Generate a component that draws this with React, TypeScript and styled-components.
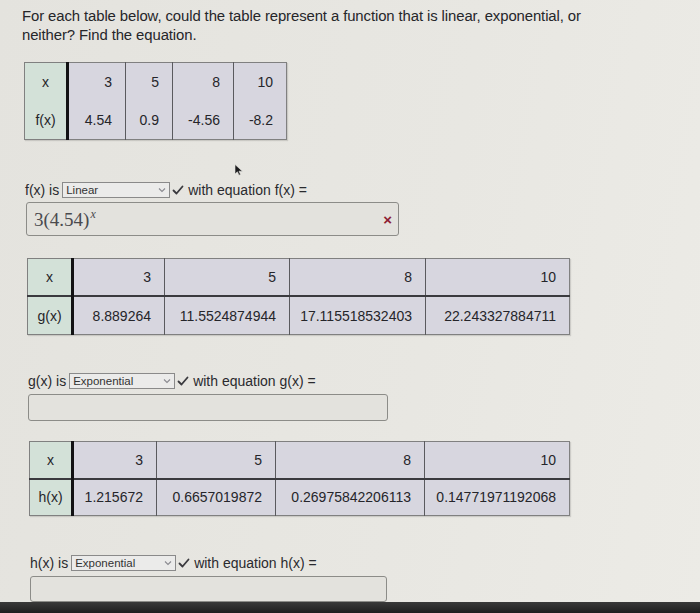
import React from "react";
import styled, { createGlobalStyle } from "styled-components";

const Global = createGlobalStyle`
  html, body { margin: 0; padding: 0; background: #e6e5e0; }
  body { font-family: "Liberation Sans", Arial, sans-serif; color: #1f1f22; }
`;

const Page = styled.div`
  position: relative;
  width: 700px;
  height: 613px;
  overflow: hidden;
  display: flex;
  flex-direction: column;
  align-items: flex-start;
  background: linear-gradient(100deg, #e4e3de 0%, #e8e7e2 60%, #ecebe6 100%);
`;

const Prompt = styled.p`
  margin: 7px 0 0 22px;
  width: 600px;
  font-size: 14.9px;
  line-height: 19px;
  color: #26262a;
  letter-spacing: -0.1px;
`;

const Table = styled.table<{ $mt: number; $ml: number }>`
  margin: ${(p) => p.$mt}px 0 0 ${(p) => p.$ml}px;
  border-collapse: collapse;
  table-layout: fixed;
  border: 1px solid #808080;
  font-size: 14px;
  color: #25252a;
  box-shadow: 1px 1px 1px rgba(0, 0, 0, 0.12);
`;

const Row = styled.tr<{ $h: number }>`
  height: ${(p) => p.$h}px;
  & + & td, & + & th { border-top: 2px solid #3a3a3e; }
`;

const HeadCell = styled.th<{ $w: number }>`
  width: ${(p) => p.$w}px;
  padding: 0;
  box-sizing: border-box;
  background: #d3e1d8;
  font-weight: normal;
  text-align: center;
  border-right: 3px solid #121214;
`;

const Cell = styled.td<{ $w: number }>`
  width: ${(p) => p.$w}px;
  padding: 0 13px 0 0;
  box-sizing: border-box;
  background: #d7d6df;
  text-align: right;
  border-left: 1px solid #5a5a5e;
  white-space: nowrap;
`;

const AnswerLine = styled.div<{ $mt: number; $ml: number }>`
  margin: ${(p) => p.$mt}px 0 0 ${(p) => p.$ml}px;
  display: flex;
  align-items: center;
  height: 16px;
  font-size: 14px;
  color: #2a2a2e;
`;

const Select = styled.div<{ $w: number }>`
  margin-left: 3px;
  width: ${(p) => p.$w}px;
  height: 16px;
  box-sizing: border-box;
  border: 1px solid #8a8a8a;
  background: #ebebea;
  display: flex;
  align-items: center;
  justify-content: space-between;
  padding: 0 3px 0 3px;
  font-size: 11.5px;
  color: #333;
`;

const Chevron = styled.svg`
  width: 8px;
  height: 6px;
`;

const Check = styled.svg`
  margin: 0 4px 0 2px;
  width: 12px;
  height: 10px;
`;

const InputBox = styled.div<{ $mt: number; $ml: number; $w: number; $h: number }>`
  margin: ${(p) => p.$mt}px 0 0 ${(p) => p.$ml}px;
  width: ${(p) => p.$w}px;
  height: ${(p) => p.$h}px;
  box-sizing: border-box;
  border: 1px solid #8c8c88;
  border-radius: 3px;
  background: #e3e2dd;
  display: flex;
  align-items: center;
  justify-content: space-between;
  padding: 0 6px 0 7px;
`;

const MathText = styled.span`
  font-family: "Liberation Serif", "DejaVu Serif", serif;
  font-size: 19px;
  color: #4a4a4e;
  sup { font-style: italic; font-size: 12px; vertical-align: 8px; margin-left: 1px; }
`;

const Wrong = styled.span`
  color: #8e1d33;
  font-size: 15px;
  font-weight: bold;
  margin-top: 2px;
`;

const Bezel = styled.div`
  margin-top: auto;
  align-self: stretch;
  height: 11px;
  background: linear-gradient(180deg, #3a3a3a 0%, #1e1e1e 100%);
`;

const Cursor = styled.svg`
  position: absolute;
  left: 234px;
  top: 164px;
  width: 10px;
  height: 12px;
`;

type TableData = {
  mt: number;
  ml: number;
  label: string;
  widths: number[];
  heights: [number, number];
  xs: string[];
  ys: string[];
};

const tables: TableData[] = [
  {
    mt: 17, ml: 24, label: "f(x)", widths: [43, 58, 47, 61, 53], heights: [39, 38],
    xs: ["3", "5", "8", "10"], ys: ["4.54", "0.9", "-4.56", "-8.2"],
  },
  {
    mt: 22, ml: 27, label: "g(x)", widths: [45, 92, 125, 136, 144], heights: [38, 38],
    xs: ["3", "5", "8", "10"], ys: ["8.889264", "11.5524874944", "17.115518532403", "22.243327884711"],
  },
  {
    mt: 20, ml: 29, label: "h(x)", widths: [43, 84, 119, 149, 145], heights: [37, 37],
    xs: ["3", "5", "8", "10"], ys: ["1.215672", "0.6657019872", "0.26975842206113", "0.14771971192068"],
  },
];

function ValueTable({ t }: { t: TableData }) {
  const total = t.widths.reduce((a, b) => a + b, 0);
  return (
    <Table $mt={t.mt} $ml={t.ml} style={{ width: total }}>
      <tbody>
        <Row $h={t.heights[0]}>
          <HeadCell $w={t.widths[0]}>x</HeadCell>
          {t.xs.map((v, i) => (
            <Cell key={i} $w={t.widths[i + 1]}>{v}</Cell>
          ))}
        </Row>
        <Row $h={t.heights[1]}>
          <HeadCell $w={t.widths[0]}>{t.label}</HeadCell>
          {t.ys.map((v, i) => (
            <Cell key={i} $w={t.widths[i + 1]}>{v}</Cell>
          ))}
        </Row>
      </tbody>
    </Table>
  );
}

function Answer({ name, choice, mt, ml, selW }: { name: string; choice: string; mt: number; ml: number; selW: number }) {
  return (
    <AnswerLine $mt={mt} $ml={ml}>
      <span>{name} is</span>
      <Select $w={selW}>
        <span>{choice}</span>
        <Chevron viewBox="0 0 8 6">
          <path d="M1 1.5 L4 4.5 L7 1.5" fill="none" stroke="#8a8a90" strokeWidth="1.1" />
        </Chevron>
      </Select>
      <Check viewBox="0 0 12 10">
        <path d="M1.5 5.5 L4.5 8.5 L10.5 1.5" fill="none" stroke="#3a3a3e" strokeWidth="1.8" strokeLinecap="round" strokeLinejoin="round" />
      </Check>
      <span>with equation {name} =</span>
    </AnswerLine>
  );
}

export default function App() {
  return (
    <Page>
      <Global />
      <Prompt>
        For each table below, could the table represent a function that is linear, exponential, or neither? Find the equation.
      </Prompt>

      <ValueTable t={tables[0]} />
      <Answer name="f(x)" choice="Linear" mt={42} ml={25} selW={108} />
      <InputBox $mt={4} $ml={26} $w={373} $h={35}>
        <MathText>
          3(4.54)<sup>x</sup>
        </MathText>
        <Wrong>×</Wrong>
      </InputBox>

      <ValueTable t={tables[1]} />
      <Answer name="g(x)" choice="Exponential" mt={38} ml={28} selW={106} />
      <InputBox $mt={5} $ml={28} $w={360} $h={28} />

      <ValueTable t={tables[2]} />
      <Answer name="h(x)" choice="Exponential" mt={39} ml={30} selW={105} />
      <InputBox $mt={5} $ml={30} $w={357} $h={27} />

      <Bezel />

      <Cursor viewBox="0 0 10 12">
        <path d="M1 0.5 L1 10 L3.4 7.8 L5 11.2 L6.6 10.5 L5 7.2 L8.4 7.2 Z" fill="#1b1b1d" stroke="#e6e5e0" strokeWidth="0.6" />
      </Cursor>
    </Page>
  );
}
